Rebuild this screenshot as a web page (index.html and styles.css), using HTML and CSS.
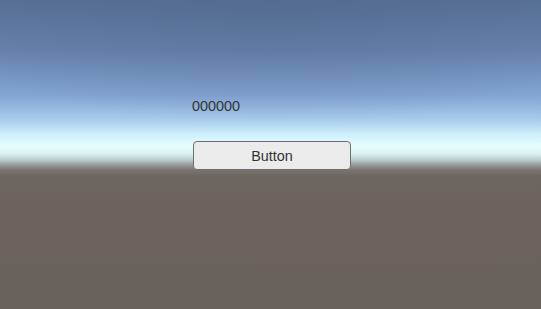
FILE: index.html
```html
<!DOCTYPE html>
<html lang="en">
<head>
    <meta charset="UTF-8">
    <title>Scene</title>
    <link rel="stylesheet" href="styles.css">
</head>
<body>
    <div class="scene">
        <!-- UI canvas -->
        <div class="canvas">
            <div class="score">000000</div>
            <button class="ui-button">Button</button>
        </div>
    </div>
</body>
</html>
```
FILE: styles.css
```css
* {
    margin: 0;
    padding: 0;
    box-sizing: border-box;
}

html, body {
    width: 100%;
    height: 100%;
}

/* skybox */
.scene {
    width: 100%;
    height: 100vh;
    overflow: hidden;
    background:
        radial-gradient(ellipse 70% 40% at 50% 0%, rgba(78, 100, 140, 0.45), rgba(78, 100, 140, 0) 100%),
        linear-gradient(to bottom,
            #587097 0px,
            #6684ae 50px,
            #84a4d2 95px,
            #a6c8ec 118px,
            #cdeefa 134px,
            #e4fefe 146px,
            #daf0f0 154px,
            #bccaca 160px,
            #96999a 165px,
            #7a7470 170px,
            #6e6660 176px,
            #6c635e 200px,
            #69615c 309px);
}

.canvas {
    display: flex;
    flex-direction: column;
    align-items: flex-start;
    padding: 98px 0 0 192px;
}

.score {
    font-family: "Liberation Sans", Arial, sans-serif;
    font-size: 14.4px;
    line-height: 17px;
    color: #323232;
}

.ui-button {
    margin: 26px 0 0 1px;
    width: 158px;
    height: 29px;
    background: #ebebeb;
    border: 1px solid #6e6e6e;
    border-radius: 4px;
    font-family: "Liberation Sans", Arial, sans-serif;
    font-size: 14.4px;
    color: #323232;
    padding-top: 1px;
}
```
